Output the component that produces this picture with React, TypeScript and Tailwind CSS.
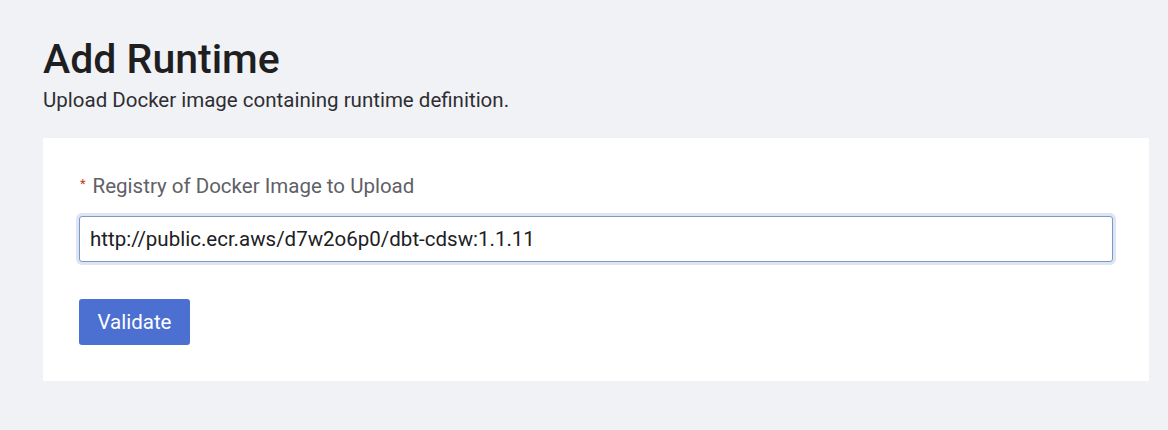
import React from "react";

export default function App() {
  return (
    <div className="min-h-[430px] w-[1168px] bg-[#f1f2f6] pt-[35px] px-[43px] font-['Roboto',sans-serif]">
      <h1 className="text-[41px] leading-[48px] font-medium text-[#1f1f22]">Add Runtime</h1>
      <p className="mt-[4px] text-[20.5px] leading-[26px] text-[#2e2e32]">
        Upload Docker image containing runtime definition.
      </p>
      <div className="mt-[25px] w-[1106px] h-[243px] bg-white pt-[36px] px-[36px]">
        <label className="flex items-center text-[20.5px] leading-[24px] text-[#606066]">
          <span className="text-[#c0392b] text-[13px] ml-[1px] mr-[7px] -mt-[5px]">*</span>
          Registry of Docker Image to Upload
        </label>
        <div className="mt-[15px] -mx-[3px] rounded-[6px] bg-[#dde4f2] p-[3px]">
          <input
            readOnly
            value="http://public.ecr.aws/d7w2o6p0/dbt-cdsw:1.1.11"
            className="block w-full h-[46px] rounded-[3px] border border-[#7f98cb] bg-white px-[10px] text-[20.5px] text-[#202024] outline-none font-['Roboto',sans-serif]"
          />
        </div>
        <button className="mt-[34px] h-[46px] w-[111px] rounded-[3px] bg-[#4b70d1] text-white text-[20.5px] font-['Roboto',sans-serif]">
          Validate
        </button>
      </div>
    </div>
  );
}
